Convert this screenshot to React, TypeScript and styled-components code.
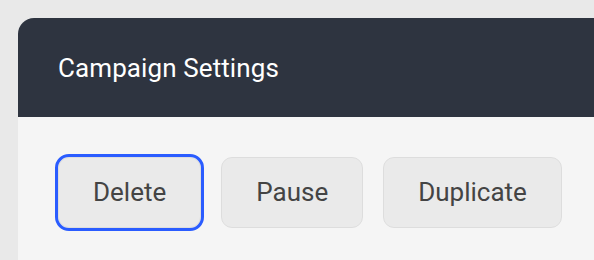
import React from 'react';
import styled, { createGlobalStyle } from 'styled-components';

const GlobalStyle = createGlobalStyle`
  html, body {
    margin: 0;
    padding: 0;
    background: #e9e9e9;
    overflow: hidden;
  }
  body {
    font-family: Roboto, "Liberation Sans", sans-serif;
  }
`;

const Page = styled.div`
  padding: 18px 0 0 18px;
  height: 260px;
  box-sizing: border-box;
  overflow: hidden;
`;

const Card = styled.section`
  width: 620px;
  border-radius: 16px 16px 0 0;
  overflow: hidden;
  background: #f5f5f5;
  min-height: 260px;
`;

const Header = styled.header`
  display: flex;
  align-items: center;
  height: 99px;
  padding: 0 40px;
  background: #2e3440;
`;

const Title = styled.h2`
  margin: 0;
  font-size: 26px;
  font-weight: 400;
  color: #ffffff;
  letter-spacing: 0.1px;
`;

const Body = styled.div`
  display: flex;
  gap: 20px;
  padding: 40px;
`;

const Button = styled.button<{ $focused?: boolean }>`
  font-family: Roboto, "Liberation Sans", sans-serif;
  font-size: 26px;
  line-height: 31px;
  font-weight: 400;
  color: #444444;
  background: #eaeaea;
  border: 1px solid #dddddd;
  border-radius: 11px;
  padding: 19px 34px;
  cursor: pointer;
  outline: ${({ $focused }) => ($focused ? '3px solid #2a5cff' : 'none')};
  outline-offset: 0;
`;

export default function App() {
  return (
    <>
      <GlobalStyle />
      <Page>
        <Card>
          <Header>
            <Title>Campaign Settings</Title>
          </Header>
          <Body>
            <Button $focused>Delete</Button>
            <Button>Pause</Button>
            <Button>Duplicate</Button>
          </Body>
        </Card>
      </Page>
    </>
  );
}
